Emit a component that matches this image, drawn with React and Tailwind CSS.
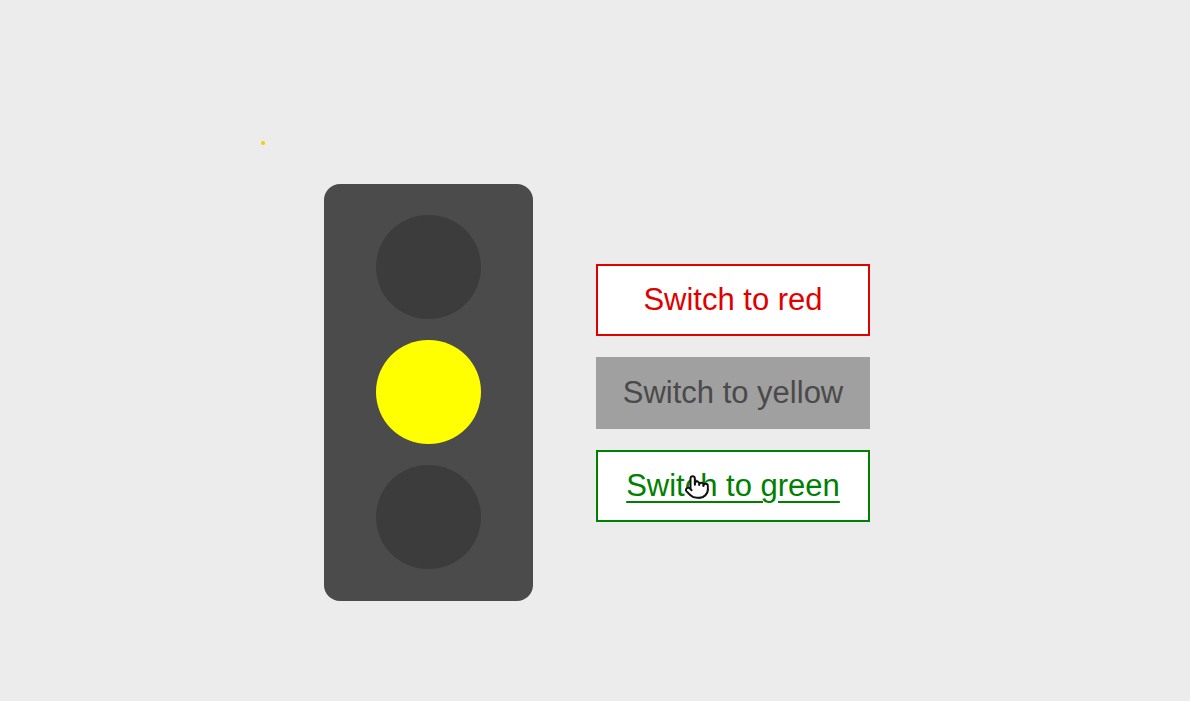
import React, { useState } from "react";
import { Pointer } from "lucide-react";

// Semáforo con tres luces y botones para cambiar el color activo
const luces = [
    { id: "red", encendida: "bg-[#ff0000]" },
    { id: "yellow", encendida: "bg-[#ffff00]" },
    { id: "green", encendida: "bg-[#00c000]" },
];

const botones = [
    { id: "red", texto: "Switch to red", estilo: "border-[#e00000] text-[#e00000]" },
    { id: "yellow", texto: "Switch to yellow", estilo: "border-[#e8e000] text-[#b0a800]" },
    { id: "green", texto: "Switch to green", estilo: "border-[#008000] text-[#008000]" },
];

export default function App() {
    const [activa, setActiva] = useState("yellow");
    const [hover, setHover] = useState("green");

    return (
        <div
            className="relative min-h-[701px] bg-[#ececec] flex justify-center items-center gap-[63px] pt-[184px] pb-[100px] pl-[4px]"
            style={{ fontFamily: '"Liberation Sans", Arial, sans-serif' }}
        >
            {/* punto suelto */}
            <span className="absolute left-[261px] top-[141px] w-[4px] h-[4px] rounded-full bg-[#f5d000]" />

            {/* caja del semáforo */}
            <div className="w-[209px] h-[417px] rounded-[16px] bg-[#4b4b4b] flex flex-col items-center pt-[31px] gap-[21px]">
                {luces.map((luz) => (
                    <div
                        key={luz.id}
                        className={`w-[105px] h-[104px] rounded-full ${activa === luz.id ? luz.encendida : "bg-[#3c3c3c]"}`}
                    />
                ))}
            </div>

            {/* botones */}
            <div className="flex flex-col gap-[21px]">
                {botones.map((b) => {
                    const deshabilitado = activa === b.id;
                    return (
                        <button
                            key={b.id}
                            onClick={() => setActiva(b.id)}
                            onMouseEnter={() => setHover(b.id)}
                            disabled={deshabilitado}
                            className={`relative w-[274px] h-[72px] text-[31px] leading-none ${
                                deshabilitado
                                    ? "bg-[#a0a0a0] text-[#4a4a4a] border-2 border-[#a0a0a0]"
                                    : `bg-white border-2 ${b.estilo}`
                            } ${hover === b.id && !deshabilitado ? "underline underline-offset-[5px] decoration-2" : ""}`}
                        >
                            {b.texto}
                            {hover === b.id && !deshabilitado && (
                                <Pointer
                                    className="absolute left-[86px] top-[21px] w-[26px] h-[28px] text-[#111] fill-white"
                                    strokeWidth={1.8}
                                />
                            )}
                        </button>
                    );
                })}
            </div>
        </div>
    );
}
